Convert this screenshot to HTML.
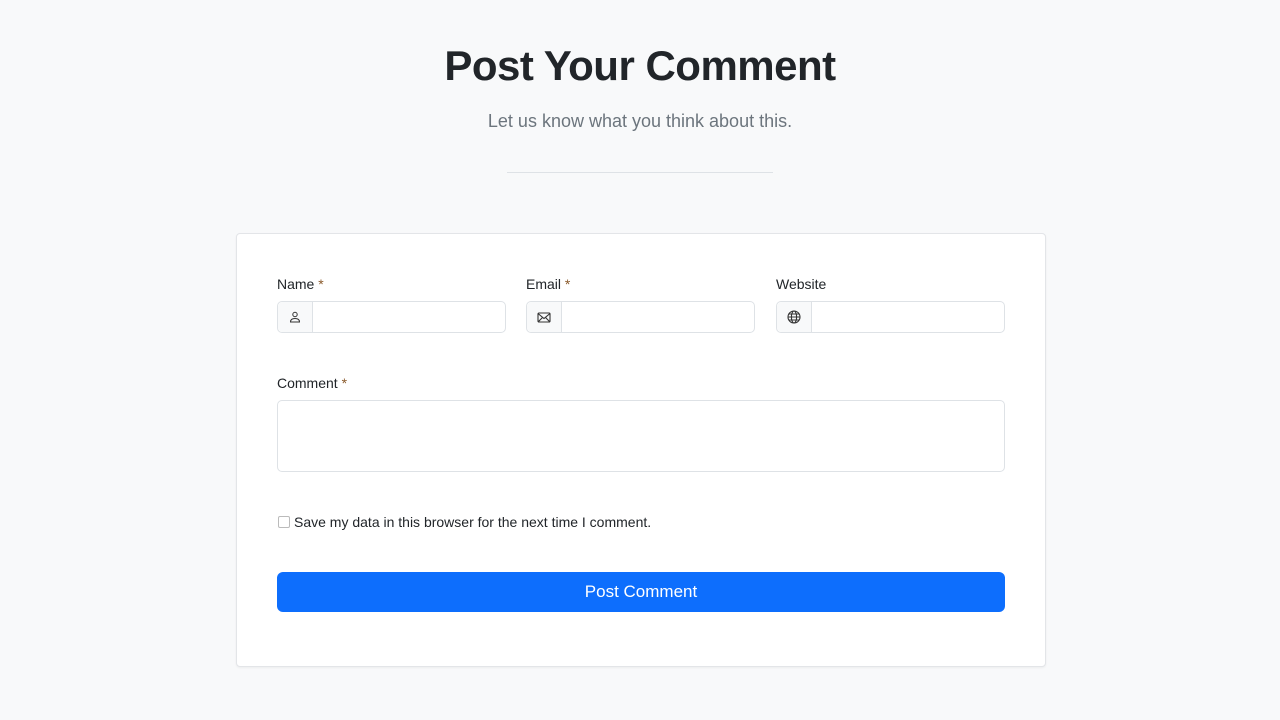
<!DOCTYPE html>
<html><head><style>
*{box-sizing:border-box;margin:0;padding:0}
body{width:1280px;height:720px;background:#f8f9fa;font-family:"Liberation Sans",sans-serif;color:#212529;position:relative}
h1{position:absolute;top:42px;width:100%;text-align:center;font-size:42px;font-weight:700;letter-spacing:-0.5px}
.sub{position:absolute;top:111px;width:100%;text-align:center;font-size:18px;color:#6c757d}
.hr{position:absolute;left:507px;top:172px;width:266px;height:1px;background:#dee2e6}
.card{position:absolute;left:236px;top:233px;width:810px;height:434px;background:#fff;border:1px solid #e3e5e8;border-radius:4px;box-shadow:0 1px 2px rgba(0,0,0,.05)}
.lbl{position:absolute;font-size:14px;color:#212529}
.lbl span{color:#8a5a2b}
.grp{position:absolute;top:67px;width:229px;height:32px;border:1px solid #dee2e6;border-radius:5px;display:flex}
.ic{width:35px;height:100%;background:#f8f9fa;border-right:1px solid #dee2e6;display:flex;align-items:center;justify-content:center;border-radius:5px 0 0 5px}
.ta{position:absolute;left:40px;top:166px;width:728px;height:72px;border:1px solid #dee2e6;border-radius:5px}
.cb{position:absolute;left:41px;top:282px;width:12px;height:12px;border:1px solid #bbb;border-radius:2px}
.btn{position:absolute;left:40px;top:338px;width:728px;height:40px;background:#0d6efd;border-radius:6px;color:#fff;font-size:17px;text-align:center;line-height:40px}
</style></head><body>
<h1>Post Your Comment</h1>
<div class="sub">Let us know what you think about this.</div>
<div class="hr"></div>
<div class="card">
<div class="lbl" style="left:40px;top:42px">Name <span>*</span></div>
<div class="lbl" style="left:289px;top:42px">Email <span>*</span></div>
<div class="lbl" style="left:539px;top:42px">Website</div>
<div class="grp" style="left:40px"><div class="ic"><svg width="12" height="12" viewBox="0 0 12 12" fill="none" stroke="#333" stroke-width="1"><circle cx="6" cy="3.5" r="2.2"/><path d="M1.5 11h9c0-2.5-2-3.5-4.5-3.5S1.5 8.5 1.5 11z"/></svg></div></div>
<div class="grp" style="left:289px"><div class="ic"><svg width="14" height="11" viewBox="0 0 14 11" fill="none" stroke="#333" stroke-width="1.1"><rect x="1" y="1" width="12" height="9" rx="1"/><path d="M1 1.5l6 5 6-5M1 10l4.5-4.5M13 10L8.5 5.5"/></svg></div></div>
<div class="grp" style="left:539px"><div class="ic"><svg width="14" height="14" viewBox="0 0 14 14" fill="none" stroke="#333" stroke-width="1.1"><circle cx="7" cy="7" r="6"/><ellipse cx="7" cy="7" rx="2.6" ry="6"/><path d="M1 7h12M2 4h10M2 10h10"/></svg></div></div>
<div class="lbl" style="left:40px;top:141px">Comment <span>*</span></div>
<div class="ta"></div>
<div class="cb"></div>
<div class="lbl" style="left:57px;top:280px">Save my data in this browser for the next time I comment.</div>
<div class="btn">Post Comment</div>
</div>
</body></html>
